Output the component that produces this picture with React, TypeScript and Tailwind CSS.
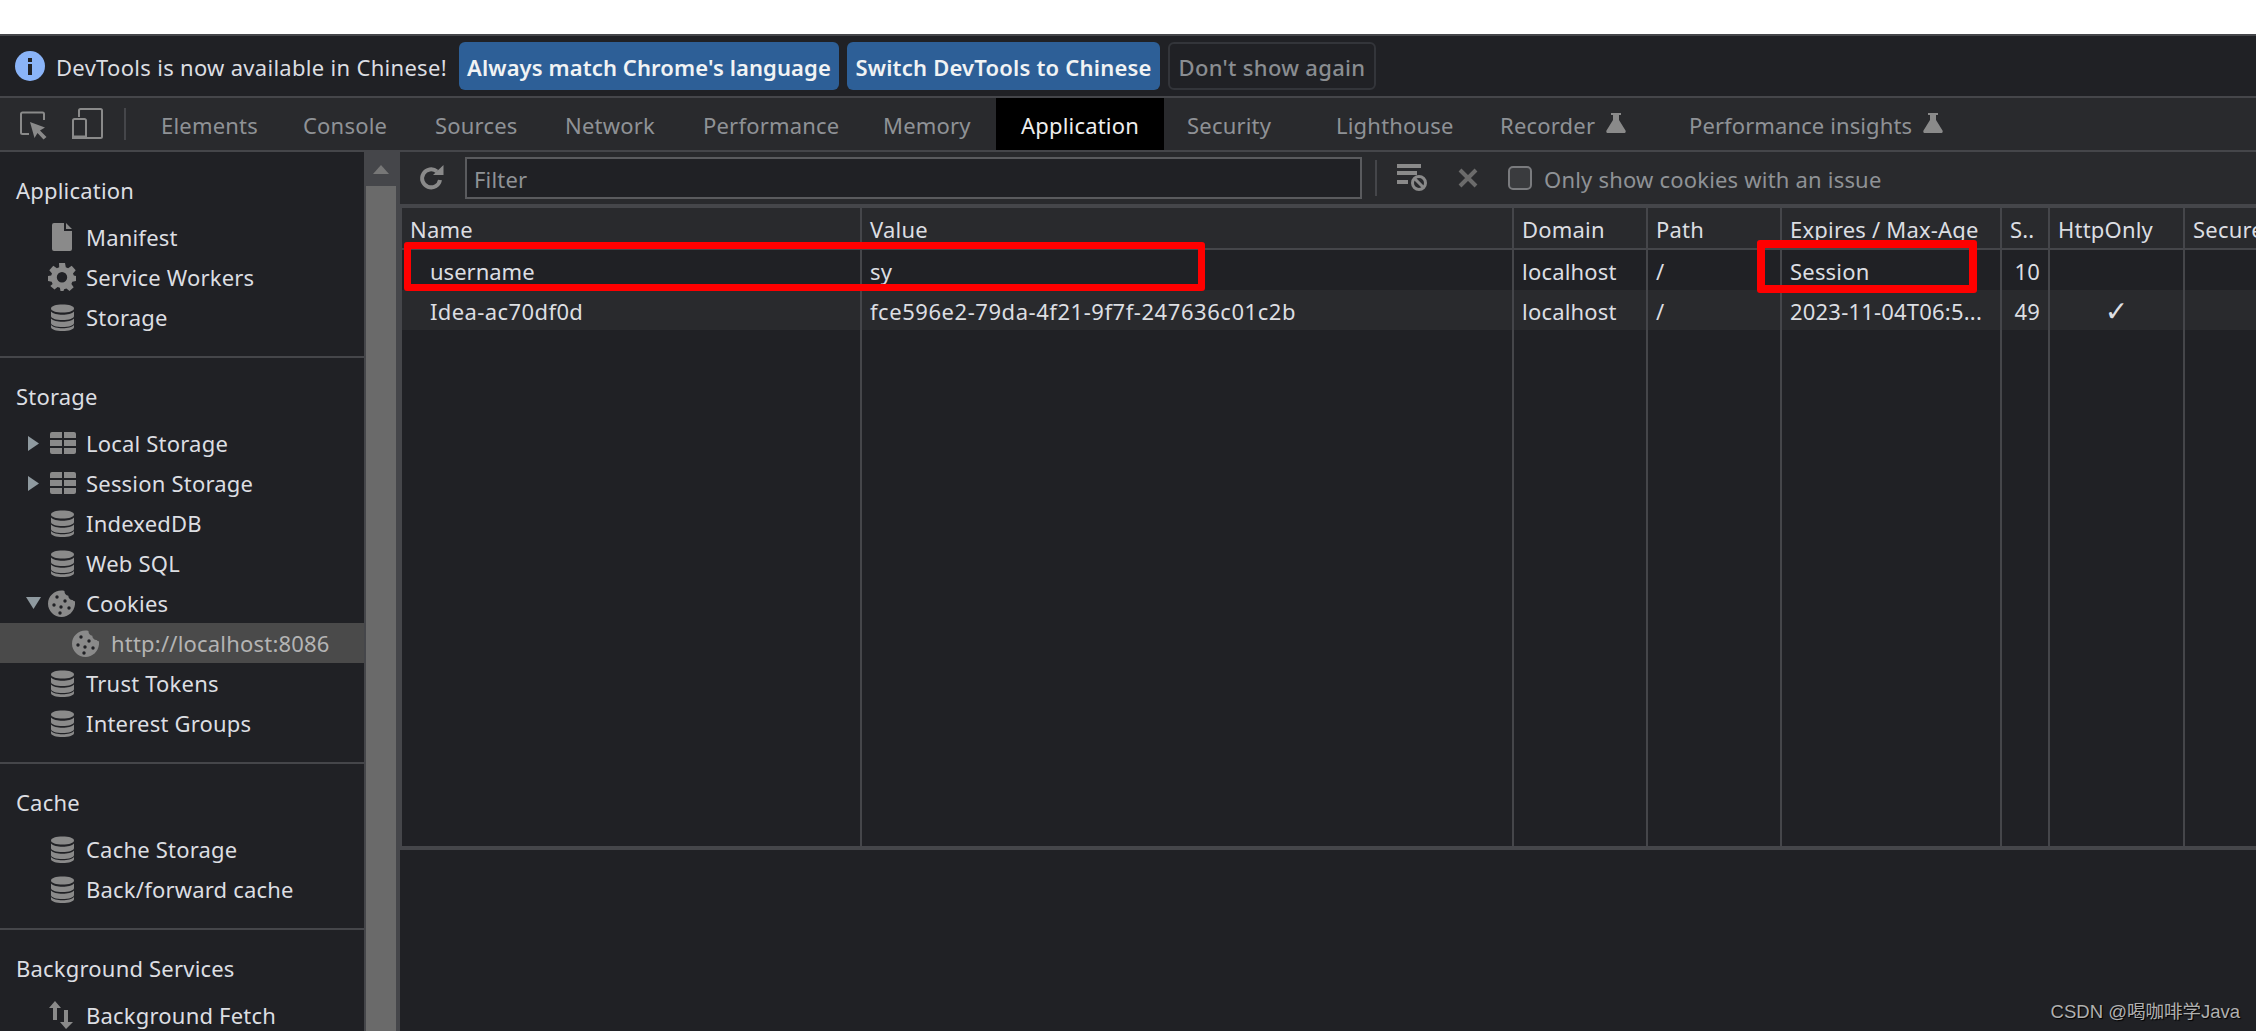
import React from "react";

const font = "[font-family:'Noto_Sans',sans-serif]";

function Db() {
  return (
    <svg width="25" height="27" viewBox="0 0 25 27" fill="#8a8a8a" className="ml-0.5">
      <path d="M1 4.500C1 2 6 .5 12.500.5S24 2 24 4.500 19 8.500 12.500 8.500 1 7 1 4.500Z" />
      <path d="M1 7.500c2 2.300 6.500 3.200 11.500 3.200S22 9.800 24 7.500v4.500c0 2.500-5 4-11.500 4S1 14.500 1 12Z" />
      <path d="M1 14.500c2 2.300 6.500 3.200 11.500 3.200s9.500-.9 11.500-3.200V19c0 2.500-5 4-11.500 4S1 21.500 1 19Z" />
      <path d="M1 21c2 2.300 6.500 3.200 11.500 3.200S22 23.300 24 21v2c0 2.500-5 4-11.500 4S1 25.500 1 23Z" />
    </svg>
  );
}

function Grid() {
  return (
    <svg width="26" height="22" viewBox="0 0 26 22" fill="#8a8a8a" className="ml-0.5">
      <path d="M0 2a2 2 0 0 1 2-2h10v6H0ZM14 0h10a2 2 0 0 1 2 2v4H14ZM0 8h12v6H0ZM14 8h12v6H14ZM0 16h12v6H2a2 2 0 0 1-2-2ZM14 16h12v4a2 2 0 0 1-2 2H14Z" />
    </svg>
  );
}

function Gear() {
  return (
    <svg width="28" height="28" viewBox="0 0 28 28" fill="#8a8a8a" fillRule="evenodd">
      <path d="M11 0h6l.8 4.200 2.300 1L23.700 2.800l4 4.500-2.700 3.100.8 2.100L28 13v5l-3.700.7-.9 2.300 2.300 3.300-4.200 3.600-3.100-2.500-2.300.8L15.500 28h-3l-.6-3.200-2.300-.8-3.100 2.500-4.200-3.600L4.600 21l-.9-2.300L0 18v-5l3.200-.5L4 10.400 1.300 7.300l4-4.500L8.900 5.200l2.300-1ZM14 9a5.200 5.200 0 1 0 0 10.400A5.200 5.200 0 0 0 14 9Z" />
    </svg>
  );
}

function Cookie() {
  return (
    <svg width="27" height="27" viewBox="0 0 27 27">
      <path
        fill="#8a8a8a"
        d="M13.500.500c1 0 2 .1 3 .4-.2 2.600 1.400 4.600 3.800 4.800.1 2.500 2 4.300 4.300 4.200.6.900 1.900 1.400 2.400 1.300.1.600.1 1.200.1 1.800C27 20.900 21 27 13.500 27S0 20.900 0 13.700 6 .5 13.500.500Z"
      />
      <g fill="#202125">
        <circle cx="9" cy="7" r="1.700" />
        <circle cx="17" cy="11" r="1.700" />
        <circle cx="6" cy="15" r="1.700" />
        <circle cx="13" cy="17" r="1.700" />
        <circle cx="21" cy="18" r="1.700" />
        <circle cx="12" cy="23" r="1.700" />
      </g>
    </svg>
  );
}

function Tri({ open }: { open?: boolean }) {
  return open ? (
    <svg width="15" height="12" viewBox="0 0 15 12" fill="#8f9aa0" className="-ml-0.5">
      <path d="M0 0h15L7.500 12Z" />
    </svg>
  ) : (
    <svg width="11" height="15" viewBox="0 0 11 15" fill="#8f9aa0">
      <path d="M0 0l11 7.500L0 15Z" />
    </svg>
  );
}

function Flask() {
  return (
    <svg width="20" height="20" viewBox="0 0 20 20" fill="#8a8a8a" className="ml-[11px] -mt-1.5">
      <path d="M5 0h10v2h-2v5l6.500 10.500c.6 1.100 0 2.500-1.500 2.500H2C.5 20-.1 18.600.5 17.500L7 7V2H5Z" />
    </svg>
  );
}

function Row({
  icon,
  label,
  arrow,
  selected,
}: {
  icon: React.ReactNode;
  label: string;
  arrow?: React.ReactNode;
  selected?: boolean;
}) {
  return (
    <div className={`flex h-10 items-center ${selected ? "bg-[#4a4a4a] pl-[72px] text-[#b4b4b4]" : "pl-[28px] text-[#dcdee2]"}`}>
      {!selected && <span className="flex w-[20px] shrink-0 items-center">{arrow}</span>}
      <span className={`flex shrink-0 items-center ${selected ? "w-[39px]" : "w-[38px]"}`}>{icon}</span>
      <span className="whitespace-nowrap">{label}</span>
    </div>
  );
}

function Section({ title, children, last }: { title: string; children: React.ReactNode; last?: boolean }) {
  return (
    <div className={`pt-[18px] ${last ? "" : "border-b-2 border-[#45464a] pb-[19px]"}`}>
      <div className="flex h-10 items-center pl-4 text-[#dcdee2]">{title}</div>
      <div className="mt-[7px]">{children}</div>
    </div>
  );
}

const tabs: [string, string, boolean?][] = [
  ["Elements", "w-[142px]"],
  ["Console", "w-[132px]"],
  ["Sources", "w-[130px]"],
  ["Network", "w-[138px]"],
  ["Performance", "w-[180px]"],
  ["Memory", "w-[136px]"],
  ["Application", "w-[168px]", true],
  ["Security", "w-[149px]"],
  ["Lighthouse", "w-[164px]"],
];

const cols = [
  "w-[458px]",
  "w-[652px]",
  "w-[134px]",
  "w-[134px]",
  "w-[220px]",
  "w-[48px]",
  "w-[135px]",
  "flex-1",
];

function TRow({ cells, className, body }: { cells: React.ReactNode[]; className: string; body?: boolean }) {
  return (
    <div className={`flex ${className}`}>
      {cells.map((c, i) => (
        <div
          key={i}
          className={`${cols[i]} flex shrink-0 items-center overflow-hidden pt-[3px] whitespace-nowrap ${i > 0 ? "border-l-2 border-[#45464a]" : ""} ${body && i === 5 ? "justify-end pr-[8px]" : "px-[8px]"} ${body && i === 6 ? "justify-center" : ""}`}
        >
          {c}
        </div>
      ))}
    </div>
  );
}

export default function App() {
  return (
    <div className={`flex h-[1031px] w-[2256px] flex-col overflow-hidden bg-white text-[22px] tracking-[0.2px] ${font}`}>
      <div className="h-[34px] shrink-0 bg-white" />
      {/* info bar */}
      <div className="flex h-[64px] shrink-0 items-center border-y-2 border-[#45464a] bg-[#202125] pl-[15px]">
        <svg width="30" height="30" viewBox="0 0 30 30" className="shrink-0">
          <circle cx="15" cy="15" r="15" fill="#8ab4f8" />
          <rect x="13" y="13" width="4" height="11" fill="#202125" />
          <rect x="13" y="7" width="4" height="4" fill="#202125" />
        </svg>
        <span className="ml-[11px] w-[403px] pt-[3px] tracking-[0.3px] whitespace-nowrap text-[#dcdee2]">DevTools is now available in Chinese!</span>
        <div className="flex h-12 w-[380px] items-center justify-center rounded-md bg-[#2d5f97] pt-[3px] font-semibold tracking-[0.1px] whitespace-nowrap text-[#f1f3f4]">
          Always match Chrome's language
        </div>
        <div className="ml-2 flex h-12 w-[313px] items-center justify-center rounded-md bg-[#2d5f97] pt-[3px] font-semibold tracking-[0.2px] whitespace-nowrap text-[#f1f3f4]">
          Switch DevTools to Chinese
        </div>
        <div className="ml-2 flex h-12 w-[208px] items-center justify-center rounded-md border-2 border-[#33353a] pt-[3px] font-medium tracking-[0.3px] whitespace-nowrap text-[#8a8d91]">
          Don't show again
        </div>
      </div>
      {/* tabs */}
      <div className="flex h-[54px] shrink-0 items-stretch border-b-2 border-[#45464a] bg-[#292a2d] text-[#8f9296]">
        <div className="flex w-[138px] shrink-0 items-center">
          <svg width="28" height="32" viewBox="0 0 28 32" className="ml-5 shrink-0" fill="none">
            <path d="M9 26H2.500A1.500 1.500 0 0 1 1 24.500V6a1.500 1.500 0 0 1 1.500-1.500h20A1.500 1.500 0 0 1 24 6v6" stroke="#8a8a8a" strokeWidth="2" />
            <path d="M10 14l15 5.500-5 3 6.500 6.500-3 2.500-6-6.500-3 5Z" fill="#8a8a8a" />
          </svg>
          <svg width="31" height="32" viewBox="0 0 31 32" className="ml-[24px] shrink-0" fill="none" stroke="#8a8a8a" strokeWidth="2">
            <path d="M7 9V2.500A1.500 1.500 0 0 1 8.500 1h20A1.500 1.500 0 0 1 30 2.500v26a1.500 1.500 0 0 1-1.500 1.500H15" />
            <path d="M2.500 11h10A1.500 1.500 0 0 1 14 12.500V30H1V12.500A1.500 1.500 0 0 1 2.500 11Z" />
            <path d="M1 29h13" strokeWidth="3" />
          </svg>
          <div className="ml-[21px] h-8 w-0.5 shrink-0 bg-[#45464a]" />
        </div>
        {tabs.map(([t, w, active]) => (
          <div
            key={t}
            className={`flex ${w} shrink-0 items-center pt-[3px] whitespace-nowrap ${active ? "justify-center bg-black text-[#eeeeee]" : "pl-[23px]"}`}
          >
            {t}
          </div>
        ))}
        <div className="flex w-[189px] shrink-0 items-center pt-[3px] pl-[23px]">
          Recorder
          <Flask />
        </div>
        <div className="flex shrink-0 items-center pt-[3px] pl-[23px] tracking-[0.1px]">
          Performance insights
          <Flask />
        </div>
      </div>
      <div className="flex min-h-0 flex-1 bg-[#202125]">
        {/* sidebar */}
        <div className="flex w-[400px] shrink-0 overflow-hidden">
          <div className="w-[364px] shrink-0">
            <Section title="Application">
              <Row
                label="Manifest"
                icon={
                  <svg width="20" height="28" viewBox="0 0 20 28" fill="#8a8a8a" className="ml-[4px]">
                    <path d="M2 0h10v8h8v18a2 2 0 0 1-2 2H2a2 2 0 0 1-2-2V2a2 2 0 0 1 2-2ZM14 0l6 6h-6Z" />
                  </svg>
                }
              />
              <Row label="Service Workers" icon={<Gear />} />
              <Row label="Storage" icon={<Db />} />
            </Section>
            <Section title="Storage">
              <Row label="Local Storage" icon={<Grid />} arrow={<Tri />} />
              <Row label="Session Storage" icon={<Grid />} arrow={<Tri />} />
              <Row label="IndexedDB" icon={<Db />} />
              <Row label="Web SQL" icon={<Db />} />
              <Row label="Cookies" icon={<Cookie />} arrow={<Tri open />} />
              <Row label="http://localhost:8086" icon={<Cookie />} selected />
              <Row label="Trust Tokens" icon={<Db />} />
              <Row label="Interest Groups" icon={<Db />} />
            </Section>
            <Section title="Cache">
              <Row label="Cache Storage" icon={<Db />} />
              <Row label="Back/forward cache" icon={<Db />} />
            </Section>
            <Section title="Background Services" last>
              <Row
                label="Background Fetch"
                icon={
                  <svg width="27" height="28" viewBox="0 0 27 28" fill="#8a8a8a">
                    <path d="M7 0l6 7H9v12H5V7H1ZM16 9h4v12h5l-7 7-6-7h4Z" />
                  </svg>
                }
              />
            </Section>
          </div>
          {/* scrollbar */}
          <div className="flex w-9 shrink-0 flex-col bg-[#45464a]">
            <div className="flex h-[34px] w-8 items-center justify-center pl-0.5">
              <svg width="16" height="9" viewBox="0 0 16 9" fill="#777777">
                <path d="M8 0l8 9H0Z" />
              </svg>
            </div>
            <div className="ml-0.5 w-[30px] flex-1 bg-[#6a6a6a]" />
          </div>
        </div>
        {/* main */}
        <div className="relative flex min-w-0 flex-1 flex-col">
          <div className="flex h-[56px] shrink-0 items-center border-b-4 border-[#45464a] bg-[#292a2d] text-[#8f9296]">
            <svg width="26" height="26" viewBox="0 0 26 26" fill="none" className="ml-[19px] shrink-0">
              <path d="M21 15a9 9 0 1 1-3-8.500" stroke="#8a8a8a" strokeWidth="4" />
              <path d="M14 10h10.500V0Z" fill="#8a8a8a" />
            </svg>
            <div className="ml-5 flex h-[42px] w-[897px] shrink-0 items-center border-2 border-[#5a5b5e] bg-[#202125] pt-[3px] pl-[7px]">
              Filter
            </div>
            <div className="ml-[13px] h-[36px] w-0.5 shrink-0 bg-[#45464a]" />
            <svg width="32" height="30" viewBox="0 0 32 30" fill="none" className="ml-5 shrink-0">
              <path d="M0 1h24v4H0ZM0 8h20v4H0ZM0 17h11v4H0Z" fill="#8a8a8a" />
              <circle cx="22" cy="20" r="6.500" stroke="#8a8a8a" strokeWidth="3" />
              <path d="M17.500 15.500l9 9" stroke="#8a8a8a" strokeWidth="3" />
            </svg>
            <svg width="20" height="20" viewBox="0 0 20 20" className="ml-[29px] shrink-0" stroke="#6b6b6b" strokeWidth="4">
              <path d="M2 2l16 16M18 2 2 18" />
            </svg>
            <div className="ml-[30px] h-6 w-6 shrink-0 rounded-[5px] border-2 border-[#7a7b7e] bg-[#3a3b3e]" />
            <span className="ml-[12px] pt-0.5 whitespace-nowrap">Only show cookies with an issue</span>
          </div>
          <div className="flex h-[642px] shrink-0 flex-col border-b-4 border-l-2 border-[#45464a] text-[#dcdee2]">
            <TRow
              className="h-[42px] shrink-0 border-b-2 border-[#45464a] bg-[#292a2d]"
              cells={["Name", "Value", "Domain", "Path", "Expires / Max-Age", "S..", "HttpOnly", "Secure"]}
            />
            <TRow
              body
              className="h-10 shrink-0"
              cells={[<span className="pl-[20px] tracking-normal">username</span>, "sy", "localhost", "/", "Session", "10", "", ""]}
            />
            <TRow
              body
              className="h-10 shrink-0 bg-[#292a2d]"
              cells={[
                <span className="pl-[20px] tracking-[0.4px]">Idea-ac70df0d</span>,
                <span className="tracking-[0.55px]">fce596e2-79da-4f21-9f7f-247636c01c2b</span>,
                "localhost",
                "/",
                "2023-11-04T06:5...",
                "49",
                <span className="font-['DejaVu_Sans',sans-serif] text-[28px] leading-none">✓</span>,
                "",
              ]}
            />
            <TRow className="flex-1" cells={["", "", "", "", "", "", "", ""]} />
          </div>
          {/* annotation boxes */}
          <div className="absolute top-[90px] left-[4px] h-[49px] w-[801px] rounded-[3px] border-[7px] border-[#ff0000]" />
          <div className="absolute top-[88px] left-[1357px] h-[53px] w-[220px] rounded-[3px] border-[8px] border-[#ff0000]" />
          {/* watermark */}
          <div className="absolute right-[16px] bottom-[5px] font-['Liberation_Sans','Noto_Sans_CJK_SC',sans-serif] text-[18.5px] tracking-normal text-[#b0b0b0] [text-shadow:1px_1px_1px_#000]">
            CSDN @喝咖啡学Java
          </div>
        </div>
      </div>
    </div>
  );
}
